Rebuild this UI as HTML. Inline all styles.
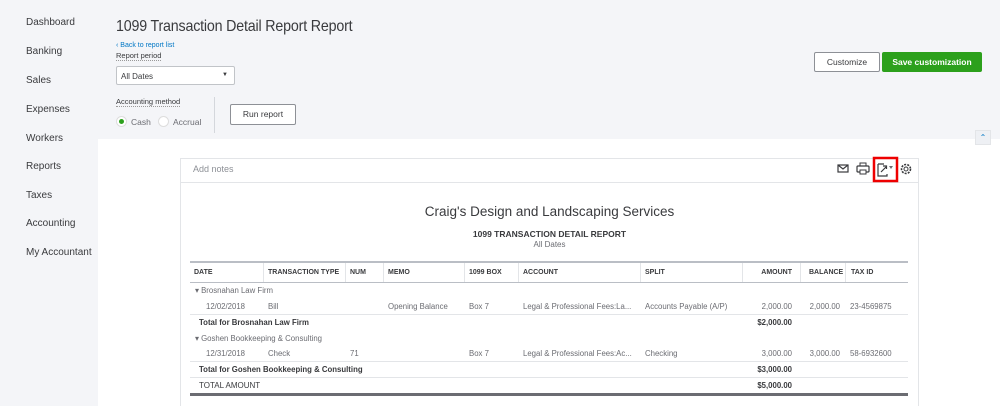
<!DOCTYPE html>
<html><head><meta charset="utf-8"><style>
*{margin:0;padding:0;box-sizing:border-box}
html,body{width:1000px;height:406px;overflow:hidden}
body{background:#f4f5f8;font-family:"Liberation Sans",sans-serif;color:#393a3d;position:relative}
.a{position:absolute;white-space:nowrap}
.nav{left:26px;font-size:10px;color:#393a3d}
.white{left:98px;top:139px;width:902px;height:267px;background:#fff}
.card{left:180px;top:158px;width:739px;height:260px;border:1px solid #e3e5e8;background:#fff}
.h{font-size:7px;font-weight:bold;color:#393a3d;top:269px}
.t{font-size:7.8px;color:#6b6c72}
.b{font-size:7.8px;font-weight:bold;color:#393a3d}
.sep{width:1px;background:#e3e5e8;top:263px;height:19px}
.line{left:190px;width:718px;height:1px;background:#e3e5e8}
.r{text-align:right}
</style></head><body>
<div class="a nav" style="top:17px">Dashboard</div>
<div class="a nav" style="top:46px">Banking</div>
<div class="a nav" style="top:75px">Sales</div>
<div class="a nav" style="top:104px">Expenses</div>
<div class="a nav" style="top:133px">Workers</div>
<div class="a nav" style="top:161px">Reports</div>
<div class="a nav" style="top:190px">Taxes</div>
<div class="a nav" style="top:218px">Accounting</div>
<div class="a nav" style="top:247px">My Accountant</div>

<div class="a" style="left:116px;top:18px;font-size:16px;letter-spacing:-0.2px;transform:scaleX(0.89);transform-origin:left;color:#393a3d">1099 Transaction Detail Report Report</div>
<div class="a" style="left:116px;top:42px;font-size:7px;color:#0077c5">‹ Back to report list</div>
<div class="a" style="left:116px;top:51px;font-size:7.5px;color:#393a3d;border-bottom:1px dotted #999">Report period</div>
<div class="a" style="left:116px;top:66px;width:119px;height:19px;background:#fff;border:1px solid #c1c4c8;border-radius:2px;font-size:8px;padding:5px 4px;color:#393a3d">All Dates<span style="position:absolute;right:6px;top:5px;font-size:6px">▼</span></div>
<div class="a" style="left:116px;top:97px;font-size:7.5px;border-bottom:1px dotted #999">Accounting method</div>
<div class="a" style="left:116px;top:116px;width:11px;height:11px;border-radius:50%;background:#fff;border:1px solid #ddd"><div style="margin:2px;width:5px;height:5px;border-radius:50%;background:#2ca01c"></div></div>
<div class="a" style="left:131px;top:117px;font-size:8.5px;color:#6b6c72">Cash</div>
<div class="a" style="left:158px;top:116px;width:11px;height:11px;border-radius:50%;background:#fff;border:1px solid #ddd"></div>
<div class="a" style="left:173px;top:117px;font-size:8.5px;color:#6b6c72">Accrual</div>
<div class="a" style="left:214px;top:97px;width:1px;height:36px;background:#d4d7dc"></div>
<div class="a" style="left:230px;top:104px;width:66px;height:21px;background:#fff;border:1px solid #8d9096;border-radius:2px;font-size:8.5px;text-align:center;line-height:19px">Run report</div>
<div class="a" style="left:814px;top:52px;width:66px;height:20px;background:#fff;border:1px solid #8d9096;border-radius:2px;font-size:8.5px;text-align:center;line-height:18px">Customize</div>
<div class="a" style="left:882px;top:52px;width:100px;height:20px;background:#2ca01c;border-radius:2px;font-size:8.5px;font-weight:bold;color:#fff;text-align:center;line-height:20px">Save customization</div>

<div class="a white"></div>
<div class="a" style="left:975px;top:130px;width:16px;height:15px;background:#eef0f4;border:1px solid #e3e5e8;font-size:8px;color:#0077c5;text-align:center;line-height:13px">⌃</div>
<div class="a card"></div>
<div class="a" style="left:181px;top:182px;width:737px;height:1px;background:#e3e5e8"></div>
<div class="a" style="left:193px;top:164px;font-size:9px;color:#8d9096">Add notes</div>
<svg class="a" style="left:835px;top:155px" width="80" height="30" viewBox="0 0 80 30">
<rect x="3" y="10" width="10" height="7" fill="none" stroke="#393a3d" stroke-width="1.2"/><path d="M3 10l5 4 5-4" fill="none" stroke="#393a3d" stroke-width="1.2"/>
<rect x="25" y="8" width="6" height="3" fill="none" stroke="#393a3d"/><rect x="22" y="11" width="12" height="6" rx="1" fill="none" stroke="#393a3d" stroke-width="1.2"/><rect x="25" y="15" width="6" height="4" fill="#fff" stroke="#393a3d"/>
<rect x="39" y="3" width="23" height="23" fill="none" stroke="#e00" stroke-width="2.5"/>
<path d="M43 9v12h9v-2M43 9h6" fill="none" stroke="#393a3d" stroke-width="1.2"/><path d="M46 17l5-5M48 11h3.5v3" fill="none" stroke="#393a3d" stroke-width="1.2"/><path d="M54 11h4l-2 3z" fill="#6b6c72"/>
<circle cx="71" cy="14" r="4.5" fill="none" stroke="#393a3d" stroke-width="1.6" stroke-dasharray="2 1.2"/><circle cx="71" cy="14" r="2" fill="none" stroke="#393a3d"/>
</svg>

<div class="a" style="left:180px;width:739px;top:204px;text-align:center;font-size:13.5px;color:#393a3d">Craig's Design and Landscaping Services</div>
<div class="a" style="left:180px;width:739px;top:229px;text-align:center;font-size:8.5px;font-weight:bold">1099 TRANSACTION DETAIL REPORT</div>
<div class="a" style="left:180px;width:739px;top:240px;text-align:center;font-size:8px;color:#6b6c72">All Dates</div>

<div class="a" style="left:190px;top:261px;width:718px;height:2px;background:#babec5"></div>
<div class="a" style="left:190px;top:282px;width:718px;height:1px;background:#babec5"></div>
<div class="a sep" style="left:263px"></div><div class="a sep" style="left:345px"></div><div class="a sep" style="left:383px"></div><div class="a sep" style="left:464px"></div><div class="a sep" style="left:518px"></div><div class="a sep" style="left:640px"></div><div class="a sep" style="left:742px"></div><div class="a sep" style="left:800px"></div><div class="a sep" style="left:845px"></div>
<div class="a h" style="left:194px">DATE</div><div class="a h" style="left:268px">TRANSACTION TYPE</div><div class="a h" style="left:350px">NUM</div><div class="a h" style="left:388px">MEMO</div><div class="a h" style="left:469px">1099 BOX</div><div class="a h" style="left:523px">ACCOUNT</div><div class="a h" style="left:645px">SPLIT</div><div class="a h r" style="left:742px;width:50px">AMOUNT</div><div class="a h" style="left:809px">BALANCE</div><div class="a h" style="left:851px">TAX ID</div>

<div class="a t" style="left:195px;top:286px">▾ Brosnahan Law Firm</div>
<div class="a t" style="left:206px;top:302px">12/02/2018</div><div class="a t" style="left:268px;top:302px">Bill</div><div class="a t" style="left:388px;top:302px">Opening Balance</div><div class="a t" style="left:469px;top:302px">Box 7</div><div class="a t" style="left:523px;top:302px">Legal &amp; Professional Fees:La...</div><div class="a t" style="left:645px;top:302px">Accounts Payable (A/P)</div><div class="a t r" style="left:732px;width:60px;top:302px">2,000.00</div><div class="a t r" style="left:780px;width:60px;top:302px">2,000.00</div><div class="a t" style="left:850px;top:302px">23-4569875</div>
<div class="a line" style="top:314px"></div>
<div class="a b" style="left:199px;top:318px">Total for Brosnahan Law Firm</div><div class="a b r" style="left:732px;width:60px;top:318px">$2,000.00</div>
<div class="a t" style="left:195px;top:334px">▾ Goshen Bookkeeping &amp; Consulting</div>
<div class="a t" style="left:206px;top:349px">12/31/2018</div><div class="a t" style="left:268px;top:349px">Check</div><div class="a t" style="left:350px;top:349px">71</div><div class="a t" style="left:469px;top:349px">Box 7</div><div class="a t" style="left:523px;top:349px">Legal &amp; Professional Fees:Ac...</div><div class="a t" style="left:645px;top:349px">Checking</div><div class="a t r" style="left:732px;width:60px;top:349px">3,000.00</div><div class="a t r" style="left:780px;width:60px;top:349px">3,000.00</div><div class="a t" style="left:850px;top:349px">58-6932600</div>
<div class="a line" style="top:361px"></div>
<div class="a b" style="left:199px;top:365px">Total for Goshen Bookkeeping &amp; Consulting</div><div class="a b r" style="left:732px;width:60px;top:365px">$3,000.00</div>
<div class="a line" style="top:377px"></div>
<div class="a" style="left:199px;top:381px;font-size:8px;color:#393a3d">TOTAL AMOUNT</div><div class="a b r" style="left:732px;width:60px;top:381px">$5,000.00</div>
<div class="a" style="left:190px;top:393px;width:718px;height:3px;background:#6b6c72"></div>
</body></html>
